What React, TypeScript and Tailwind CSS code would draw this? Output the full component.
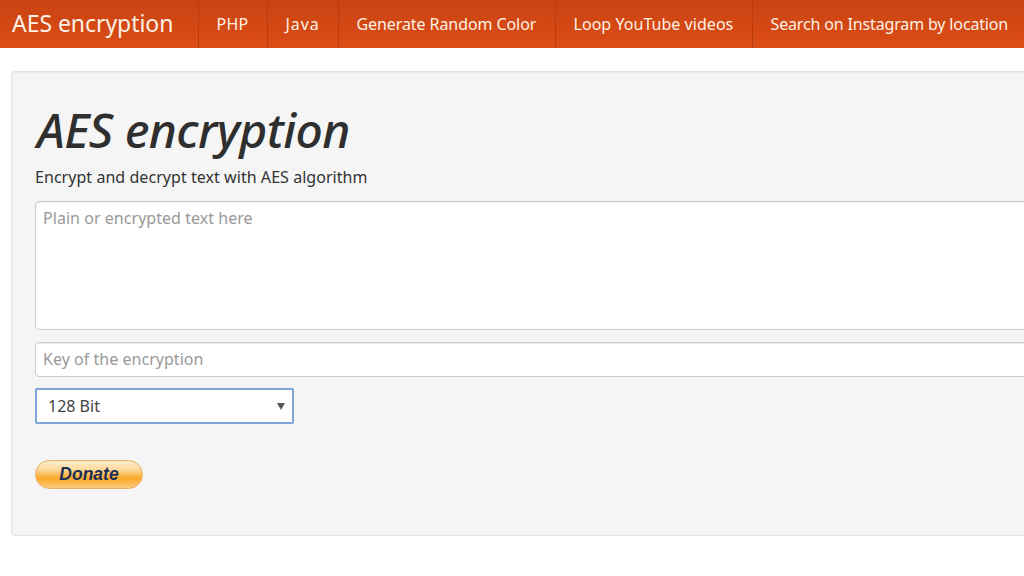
const links = [
  { label: "PHP", className: "w-[69px] tracking-[0.2px]" },
  { label: "Java", className: "w-[71px] tracking-[0.9px]" },
  { label: "Generate Random Color", className: "w-[217px] tracking-[-0.08px]" },
  { label: "Loop YouTube videos", className: "w-[197px] tracking-[0.04px]" },
  { label: "Search on Instagram by location", className: "w-[274px] tracking-[-0.15px]" },
]

export default function App() {
  return (
    <div className="h-[576px] w-[1024px] overflow-hidden bg-white font-['Noto_Sans',sans-serif] text-[#333]">
      <nav className="flex h-12 w-[1100px] items-stretch bg-gradient-to-b from-[#c94413] to-[#dc4c15] text-[#fdf1e6]">
        <a className="flex w-[198px] items-center whitespace-nowrap pb-0.5 pl-3 text-[23px] leading-none tracking-[-0.05px]">AES encryption</a>
        {links.map((link) => (
          <a
            key={link.label}
            className={`flex ${link.className} items-center whitespace-nowrap border-l border-[#b83c10] pl-[17.5px] text-[16px]`}
          >
            {link.label}
          </a>
        ))}
      </nav>

      <div className="mt-[23px] ml-[11px] h-[465px] w-[1100px] rounded border border-[#e3e3e3] bg-[#f5f5f5] pt-[29px] pl-[23px] shadow-[inset_0_1px_1px_rgba(0,0,0,0.05)]">
        <h1 className="h-[58px] whitespace-nowrap pl-0.5 text-[48px] font-medium italic leading-[58px] tracking-[-0.6px] text-[#2f2f2f]">AES encryption</h1>
        <p className="mt-[6px] h-[24px] whitespace-nowrap text-[16px] leading-[24px] tracking-[0.05px]">Encrypt and decrypt text with AES algorithm</p>

        <div className="mt-[12px] h-[129px] w-full rounded border border-[#ccc] bg-white px-[7px] py-1 text-[16px] leading-[24px] tracking-[0.04px] text-[#999] shadow-[inset_0_1px_1px_rgba(0,0,0,0.075)]">
          Plain or encrypted text here
        </div>
        <div className="mt-[12px] flex h-[35px] w-full items-center rounded border border-[#ccc] bg-white px-[7px] pb-0.5 text-[16px] tracking-[0.03px] text-[#999] shadow-[inset_0_1px_1px_rgba(0,0,0,0.075)]">
          Key of the encryption
        </div>
        <div className="mt-[11px] flex h-[36px] w-[259px] items-center justify-between rounded-[2px] border-2 border-[#7ea6d8] bg-white pr-[7px] pl-[11px] text-[16px] text-[#444]">
          <span>128 Bit</span>
          <svg width="8" height="7" viewBox="0 0 8 7">
            <path d="M0 0h8L4 7z" fill="#555" />
          </svg>
        </div>

        <button className="mt-[36px] flex h-[29px] w-[108px] items-center justify-center rounded-full border border-[#e8b066] bg-[linear-gradient(to_bottom,#fdeccb_0%,#fddca0_30%,#fba928_64%,#fdcb7e_100%)] pb-px font-['Liberation_Sans',sans-serif] text-[17.5px] font-bold italic text-[#1c2f55]">
          Donate
        </button>
      </div>
    </div>
  )
}
